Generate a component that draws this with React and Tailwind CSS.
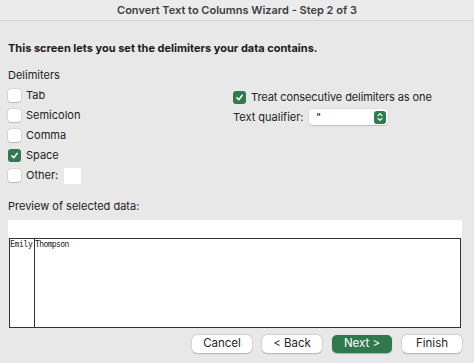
import React from 'react';

const font = { fontFamily: 'Inter, "Liberation Sans", sans-serif' };

const Box = ({ checked }) => (
  <span
    className={`w-[13px] h-[13px] rounded-[3px] flex items-center justify-center shrink-0 ${
      checked ? 'bg-[#2f7a4e]' : 'bg-white shadow-[0_0_0_0.5px_rgba(0,0,0,0.12),0_0.5px_1px_rgba(0,0,0,0.15)]'
    }`}
  >
    {checked && (
      <svg width="9" height="9" viewBox="0 0 10 10">
        <path d="M2 5.3 L4.2 7.5 L8 2.6" fill="none" stroke="white" strokeWidth="1.7" strokeLinecap="round" strokeLinejoin="round" />
      </svg>
    )}
  </span>
);

const delims = [
  { label: 'Tab' },
  { label: 'Semicolon' },
  { label: 'Comma' },
  { label: 'Space', checked: true },
  { label: 'Other:', other: true },
];

const Button = ({ children, primary }) => (
  <button
    className={`w-[60px] h-[18px] rounded-[5px] text-[11.5px] leading-none flex items-center justify-center ${
      primary
        ? 'bg-[#2e7a4d] text-white shadow-[0_0.5px_1px_rgba(0,0,0,0.25)]'
        : 'bg-white text-[#262626] shadow-[0_0_0_0.5px_rgba(0,0,0,0.1),0_0.5px_1.5px_rgba(0,0,0,0.2)]'
    }`}
  >
    {children}
  </button>
);

export default function App() {
  return (
    <div className="w-[474px] h-[363px] bg-[#e8e8e9] text-[#222] flex flex-col overflow-hidden" style={font}>
      {/* title bar */}
      <div className="h-[21px] shrink-0 bg-[#ebebeb] border-b border-[#d6d6d6] flex items-center justify-center">
        <span className="text-[11px] font-semibold text-[#3d3d3d]">Convert Text to Columns Wizard - Step 2 of 3</span>
      </div>

      <div className="flex-1 flex flex-col pl-[8px] pr-[12px]">
        <div className="mt-[20px] text-[11px] font-bold leading-[15px] text-[#1a1a1a]">
          This screen lets you set the delimiters your data contains.
        </div>

        <div className="mt-[12px] flex">
          <div className="w-[225px] flex flex-col">
            <div className="text-[11px] leading-[15px]">Delimiters</div>
            <div className="mt-[5px] flex flex-col gap-[5px]">
              {delims.map((d) => (
                <div key={d.label} className="h-[15px] flex items-center gap-[5px] text-[11px]">
                  <Box checked={d.checked} />
                  <span>{d.label}</span>
                  {d.other && <span className="ml-[1px] w-[17px] h-[16px] bg-white" />}
                </div>
              ))}
            </div>
          </div>

          <div className="flex flex-col pt-[22px]">
            <div className="h-[15px] flex items-center gap-[5px] text-[11px] tracking-[-0.1px]">
              <Box checked />
              <span>Treat consecutive delimiters as one</span>
            </div>
            <div className="mt-[4px] flex items-center text-[11px]">
              <span className="w-[76px] whitespace-nowrap">Text qualifier:</span>
              <div className="w-[79px] h-[16px] bg-white rounded-[4px] shadow-[0_0_0_0.5px_rgba(0,0,0,0.08),0_0.5px_1px_rgba(0,0,0,0.15)] flex items-center justify-between pl-[7px] pr-[2px]">
                <span className="text-[11px] leading-none">"</span>
                <span className="w-[12px] h-[13px] rounded-[3px] bg-[#2f7a4e] flex items-center justify-center">
                  <svg width="8" height="10" viewBox="0 0 8 10">
                    <path d="M2 3.6 L4 1.6 L6 3.6 M2 6.4 L4 8.4 L6 6.4" fill="none" stroke="white" strokeWidth="1.2" strokeLinecap="round" strokeLinejoin="round" />
                  </svg>
                </span>
              </div>
            </div>
          </div>
        </div>

        <div className="mt-[16px] text-[11px] leading-[15px]">Preview of selected data:</div>

        <div className="mt-[6px] h-[18px] bg-white" />
        <div className="h-[90px] bg-white border-[1.5px] border-[#333] flex ml-[1px] mr-[1px]" style={{ fontFamily: '"DejaVu Sans Mono", monospace' }}>
          <div className="w-[25px] border-r border-[#333] text-[8px] leading-[10px] pt-[1px] tracking-[-0.3px]">Emily</div>
          <div className="flex-1 text-[8px] leading-[10px] pt-[1px] tracking-[-0.6px]">Thompson</div>
        </div>

        <div className="mt-[7px] flex justify-end gap-[10px]">
          <Button>Cancel</Button>
          <Button>&lt; Back</Button>
          <Button primary>Next &gt;</Button>
          <Button>Finish</Button>
        </div>
      </div>
    </div>
  );
}
